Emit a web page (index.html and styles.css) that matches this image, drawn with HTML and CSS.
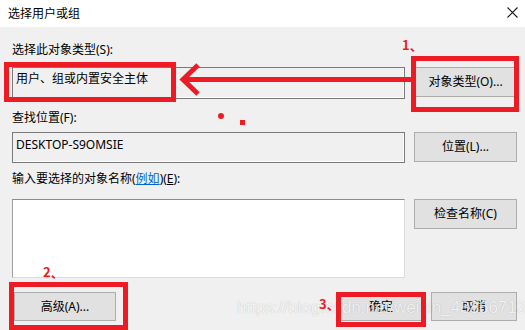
FILE: index.html
```html
<!DOCTYPE html>
<html lang="zh-CN">
<head>
<meta charset="utf-8">
<title>选择用户或组</title>
<link rel="stylesheet" href="styles.css">
</head>
<body>
<div class="window">
  <div class="titlebar">
    <span class="title">选择用户或组</span>
    <svg class="close" width="11" height="11" viewBox="0 0 11 11"><path d="M0.5 0.5 L10.5 10.5 M10.5 0.5 L0.5 10.5" stroke="#1a1a1a" stroke-width="1.1" fill="none"/></svg>
  </div>
  <div class="content">
    <div class="label l1">选择此对象类型(S):</div>
    <div class="row r1">
      <div class="field f1">用户、组或内置安全主体</div>
      <button class="btn">对象类型(O)...</button>
    </div>
    <div class="label l2">查找位置(F):</div>
    <div class="row r2">
      <div class="field f2">DESKTOP-S9OMSIE</div>
      <button class="btn">位置(L)...</button>
    </div>
    <div class="label l3">输入要选择的对象名称(<a class="link" href="#">例如</a>)(<u>E</u>):</div>
    <div class="row r3">
      <div class="area"></div>
      <button class="btn">检查名称(C)</button>
    </div>
    <div class="footer">
      <button class="btn adv">高级(A)...</button>
      <div class="spacer"></div>
      <button class="btn small">确定</button>
      <button class="btn small">取消</button>
    </div>
  </div>

  <div class="mark">https://blog.csdn.net/weixin_43866713</div>

  <div class="redbox rb1"></div>
  <div class="redbox rb2"></div>
  <div class="redbox rb3"></div>
  <div class="redbox rb4"></div>
  <svg class="arrow" width="525" height="330" viewBox="0 0 525 330">
    <path d="M198 65 L183 79.5 L198 94" stroke="#ed1c24" stroke-width="5" fill="none" stroke-linejoin="miter"/>
    <path d="M184 79.5 L413 79.5" stroke="#ed1c24" stroke-width="5" fill="none"/>
    <circle cx="221" cy="116" r="3" fill="#ed1c24"/>
    <rect x="240" y="120" width="5" height="5" fill="#ed1c24"/>
  </svg>
  <div class="num n1">1、</div>
  <div class="num n2">2、</div>
  <div class="num n3">3、</div>
</div>
</body>
</html>
```

FILE: styles.css
```css
html, body {
  margin: 0;
  padding: 0;
}
body {
  width: 525px;
  height: 330px;
  overflow: hidden;
  font-family: "Noto Sans", "Noto Sans CJK SC", sans-serif;
  font-size: 12px;
  color: #000;
}
.window {
  position: relative;
  width: 525px;
  height: 330px;
  background: #f0f0f0;
}
.titlebar {
  height: 27px;
  background: #fff;
  display: flex;
  align-items: flex-start;
  justify-content: space-between;
  padding: 5px 8px 0 8px;
  box-sizing: border-box;
}
.title {
  line-height: 16px;
  font-family: "Noto Sans CJK SC", sans-serif;
}
.close {
  margin-top: 2px;
  margin-right: -1px;
}
.content {
  display: flex;
  flex-direction: column;
  padding: 15px 8px 0 12px;
}
.label {
  line-height: 16px;
  height: 16px;
  white-space: nowrap;
}
.link {
  color: #0066cc;
  text-decoration: underline;
}
.row {
  display: flex;
  align-items: flex-start;
  gap: 9px;
}
.r1 { margin-top: 9px; }
.l2 { margin-top: 11px; }
.r2 { margin-top: 6px; }
.l3 { margin-top: 8px; }
.r3 { margin-top: 12px; }
.field {
  width: 393px;
  box-sizing: border-box;
  border: 1px solid #7a7a7a;
  box-shadow: inset -1px -1px 0 #ffffff;
  padding: 3px 3px;
  line-height: 16px;
  background: #f0f0f0;
  white-space: nowrap;
}
.f1 { height: 32px; }
.f2 { height: 31px; padding-top: 4px; }
.area {
  width: 393px;
  height: 79px;
  box-sizing: border-box;
  background: #fff;
  border-top: 1px solid #8c8c8c;
  border-left: 1px solid #a0a0a0;
  border-right: 1px solid #dcdcdc;
  border-bottom: 1px solid #dcdcdc;
}
.btn {
  width: 103px;
  height: 30px;
  box-sizing: border-box;
  background: #e1e1e1;
  border: 1px solid #adadad;
  border-radius: 0;
  padding: 0;
  margin: 0;
  font-family: "Noto Sans", "Noto Sans CJK SC", sans-serif;
  font-size: 12px;
  color: #000;
  line-height: 16px;
  white-space: nowrap;
}
.footer {
  display: flex;
  align-items: flex-start;
  gap: 7px;
  margin-top: 14px;
}
.adv {
  width: 102px;
  height: 29px;
  margin-left: 2px;
}
.spacer { flex: 1; }
.small {
  width: 86px;
  height: 29px;
}
.mark {
  position: absolute;
  left: 237px;
  top: 298px;
  font-family: "Liberation Sans", sans-serif;
  font-size: 17px;
  line-height: 20px;
  color: rgba(255, 255, 255, 0.82);
  text-shadow: 0 0 1px rgba(0, 0, 0, 0.25);
  white-space: nowrap;
}
.redbox {
  position: absolute;
  box-sizing: border-box;
  border: 5px solid #ed1c24;
}
.rb1 { left: 4px; top: 62px; width: 172px; height: 40px; }
.rb2 { left: 411px; top: 56px; width: 108px; height: 56px; }
.rb3 { left: 9px; top: 282px; width: 119px; height: 48px; }
.rb4 { left: 336px; top: 292px; width: 90px; height: 35px; }
.arrow {
  position: absolute;
  left: 0;
  top: 0;
}
.num {
  position: absolute;
  color: #ed1c24;
  font-family: "Noto Sans CJK SC", sans-serif;
  font-weight: bold;
  font-size: 13px;
  line-height: 14px;
  white-space: nowrap;
}
.n1 { left: 402px; top: 38px; }
.n2 { left: 43px; top: 265px; }
.n3 { left: 319px; top: 297px; }
```
